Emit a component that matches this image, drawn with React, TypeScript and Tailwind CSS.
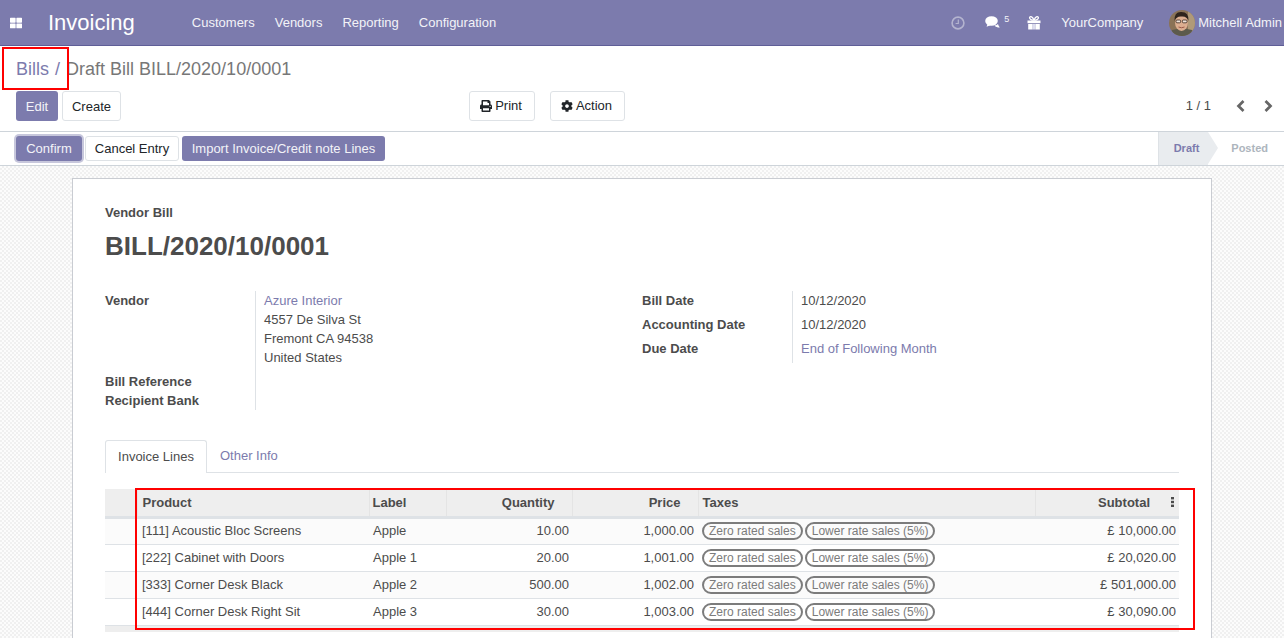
import { FaCog, FaPrint, FaThLarge } from 'react-icons/fa';

const lines = [
  { product: '[111] Acoustic Bloc Screens', label: 'Apple', qty: '10.00', price: '1,000.00', subtotal: '£ 10,000.00' },
  { product: '[222] Cabinet with Doors', label: 'Apple 1', qty: '20.00', price: '1,001.00', subtotal: '£ 20,020.00' },
  { product: '[333] Corner Desk Black', label: 'Apple 2', qty: '500.00', price: '1,002.00', subtotal: '£ 501,000.00' },
  { product: '[444] Corner Desk Right Sit', label: 'Apple 3', qty: '30.00', price: '1,003.00', subtotal: '£ 30,090.00' },
];

function Avatar() {
  return (
    <svg width="26" height="26" viewBox="0 0 26 26" className="shrink-0">
      <defs>
        <clipPath id="avatar-clip">
          <circle cx="13" cy="13" r="13" />
        </clipPath>
      </defs>
      <g clipPath="url(#avatar-clip)">
        <rect width="26" height="26" fill="#8a7256" />
        <rect x="19" width="7" height="26" fill="#b09a78" />
        <path d="M0 26 L3 20 Q13 17 23 20 L26 26 Z" fill="#5c5a4c" />
        <ellipse cx="12.5" cy="12.5" rx="6.5" ry="8.5" fill="#dcae90" />
        <path d="M5.5 11 Q5 1.5 12.5 2 Q20 2 19.5 11 Q18 6 12.5 6.5 Q7.5 6 5.5 11 Z" fill="#2f241c" />
        <rect x="7" y="10" width="4.6" height="2.8" rx="1" fill="#efe3da" stroke="#3a2a20" strokeWidth="0.8" />
        <rect x="13.4" y="10" width="4.6" height="2.8" rx="1" fill="#efe3da" stroke="#3a2a20" strokeWidth="0.8" />
        <path d="M9.5 17 Q12.5 18.5 15.5 17" stroke="#9c5a48" strokeWidth="1" fill="none" />
      </g>
    </svg>
  );
}

function Clock() {
  return (
    <svg width="14" height="14" viewBox="0 0 14 14" fill="none" stroke="#b4b4cf" strokeWidth="1.6">
      <circle cx="7" cy="7" r="5.9" />
      <path d="M7.3 3.4V7.5H4.6" strokeWidth="1.2" />
    </svg>
  );
}

function Chat() {
  return (
    <svg width="15" height="13" viewBox="0 0 15 13" fill="white">
      <ellipse cx="6.5" cy="5" rx="6.3" ry="4.8" />
      <path d="M2.5 8 L1.6 10.8 L6 9 Z" />
      <path d="M9.5 9.6 Q12 9.4 13 8 Q13.4 9.6 14.8 11.6 Q12.6 11.4 11.8 10.9 Q10.4 11 9.5 9.6 Z" />
    </svg>
  );
}

function Gift() {
  return (
    <svg width="14" height="14" viewBox="0 0 14 14" fill="white">
      <path d="M0.5 4.5H13.5V7.2H0.5Z" />
      <path d="M1.2 8H5.7V13.5H1.2Z" />
      <path d="M8.3 8H12.8V13.5H8.3Z" />
      <path d="M5.9 8H8.1V13.5H5.9Z" fill="#dcdcf0" />
      <path d="M7 4.2 C5.5 0.5 3.5 0.2 2.8 1.2 C2.1 2.4 3.8 4.2 7 4.2 Z M7 4.2 C8.5 0.5 10.5 0.2 11.2 1.2 C11.9 2.4 10.2 4.2 7 4.2 Z" fill="none" stroke="white" strokeWidth="1.3" />
    </svg>
  );
}

function Chevron({ dir }: { dir: 'left' | 'right' }) {
  return (
    <svg width="9" height="12" viewBox="0 0 9 12" fill="none" stroke="#666666" strokeWidth="2.7">
      <path d={dir === 'left' ? 'M7.5 1L2.5 6L7.5 11' : 'M1.5 1L6.5 6L1.5 11'} />
    </svg>
  );
}

function Dots() {
  return (
    <svg width="3" height="10" viewBox="0 0 3 10" fill="#4c4c4c" className="ml-[21px]">
      <rect width="3" height="2.4" />
      <rect y="3.8" width="3" height="2.4" />
      <rect y="7.6" width="3" height="2.4" />
    </svg>
  );
}

function TaxTag({ children }: { children: string }) {
  return (
    <span className="inline-block h-[18px] rounded-[9px] border-2 border-[#7c7c7c] px-[5px] text-[12px] leading-[14px] text-[#7c7c7c]">
      {children}
    </span>
  );
}

export default function App() {
  return (
    <div className="relative h-[638px] w-[1284px] overflow-hidden bg-white font-['Liberation_Sans',Arial,sans-serif] text-[13px] text-[#4c4c4c]">
      <header className="flex h-[46px] items-center border-b border-[#5f5e97] bg-[#7c7bad] pr-[2px] text-white">
        <FaThLarge className="ml-[10px] text-[12px]" />
        <span className="ml-[26px] text-[22px] leading-none">Invoicing</span>
        <nav className="ml-[57px] flex gap-[20px] text-[#f3f3f8]">
          <span>Customers</span>
          <span>Vendors</span>
          <span>Reporting</span>
          <span>Configuration</span>
        </nav>
        <div className="ml-auto flex items-center text-[#f3f3f8]">
          <Clock />
          <span className="ml-[20px]"><Chat /></span>
          <span className="mb-[6px] ml-[4px] text-[9px]">5</span>
          <span className="ml-[18px]"><Gift /></span>
          <span className="ml-[20px]">YourCompany</span>
          <span className="ml-[26px]"><Avatar /></span>
          <span className="ml-[3px] whitespace-nowrap">Mitchell Admin</span>
        </div>
      </header>

      <section className="h-[86px] border-b border-[#ced4da] px-[16px]">
        <div className="flex h-[45px] items-center pt-[2px] text-[18px] text-[#777777]">
          <span className="text-[#7c7bad]">Bills</span>
          <span className="ml-[6px] mr-[6px] text-[#7c7bad]">/</span>
          <span>Draft Bill BILL/2020/10/0001</span>
        </div>
        <div className="flex items-center">
          <button className="h-[30px] w-[42px] rounded-[3px] bg-[#7c7bad] pt-[1px] text-[#f3f3f8]">Edit</button>
          <button className="ml-[4px] h-[30px] w-[59px] rounded-[3px] border border-[#dee2e6] pt-[1px] text-[#212529]">Create</button>
          <button className="ml-[348px] flex h-[30px] w-[66px] items-center justify-center gap-[3px] rounded-[3px] border border-[#dee2e6] pr-[2px] text-[#212529]">
            <FaPrint className="text-[12px]" /> Print
          </button>
          <button className="ml-[15px] flex h-[30px] w-[75px] items-center justify-center gap-[3px] rounded-[3px] border border-[#dee2e6] pr-[2px] text-[#212529]">
            <FaCog className="text-[12px]" /> Action
          </button>
          <span className="ml-auto text-[#4c4c4c]">1 / 1</span>
          <span className="ml-[25px]"><Chevron dir="left" /></span>
          <span className="-mr-[5px] ml-[19px]"><Chevron dir="right" /></span>
        </div>
      </section>

      <section className="flex h-[34px] items-center border-b border-[#ced4da] pl-[16px]">
        <button className="h-[25px] w-[66px] rounded-[3px] bg-[#7c7bad] text-[#f3f3f8] shadow-[0_0_0_2px_#c7c7dc]">Confirm</button>
        <button className="ml-[3px] h-[25px] w-[94px] rounded-[3px] border border-[#dee2e6] text-[#212529]">Cancel Entry</button>
        <button className="ml-[3px] h-[25px] w-[203px] rounded-[3px] bg-[#7c7bad] text-[#f3f3f8]">Import Invoice/Credit note Lines</button>
        <div className="ml-auto flex h-full items-stretch text-[11px] font-bold">
          <div className="relative flex w-[50px] items-center justify-center border-l border-[#dee2e6] bg-[#e9ecef] pl-[6px] text-[#7c7bad]">
            Draft
            <span className="absolute left-full top-0 h-0 w-0 border-y-[16.5px] border-l-[10px] border-y-transparent border-l-[#e9ecef]" />
          </div>
          <div className="flex w-[76px] items-center justify-end pr-[16px] text-[#adb5bd]">Posted</div>
        </div>
      </section>

      <main className="h-[472px] bg-[#f6f6f6] bg-[repeating-conic-gradient(#f0f0f0_0_25%,#fcfcfc_0_50%)] bg-[length:4px_4px] px-[72px] pt-[12px]">
        <div className="h-[470px] w-[1140px] border border-[#c9ccd2] bg-white px-[32px] pt-[26px]">
          <div className="font-bold leading-[15px]">Vendor Bill</div>
          <h1 className="mt-[8px] text-[26px] font-bold leading-[36px]">BILL/2020/10/0001</h1>

          <div className="mt-[27px] flex h-[119px]">
            <div className="flex w-[537px]">
              <div className="w-[150px] font-bold">
                <div className="leading-[19px]">Vendor</div>
                <div className="mt-[62px] leading-[19px]">Bill Reference</div>
                <div className="leading-[19px]">Recipient Bank</div>
              </div>
              <div className="border-l border-[#dee2e6] pl-[8px] leading-[19px]">
                <div className="text-[#7c7bad]">Azure Interior</div>
                <div>4557 De Silva St</div>
                <div>Fremont CA 94538</div>
                <div>United States</div>
              </div>
            </div>
            <div className="flex h-[72px]">
              <div className="flex w-[150px] flex-col gap-[5px] font-bold leading-[19px]">
                <div>Bill Date</div>
                <div>Accounting Date</div>
                <div>Due Date</div>
              </div>
              <div className="flex flex-col gap-[5px] border-l border-[#dee2e6] pl-[8px] leading-[19px]">
                <div>10/12/2020</div>
                <div>10/12/2020</div>
                <div className="text-[#7c7bad]">End of Following Month</div>
              </div>
            </div>
          </div>

          <div className="mt-[30px] flex h-[33px] border-b border-[#dee2e6]">
            <div className="h-[33px] w-[102px] rounded-t-[3px] border border-b-0 border-[#dee2e6] bg-white text-center leading-[32px]">Invoice Lines</div>
            <div className="pl-[13px] leading-[32px] text-[#7c7bad]">Other Info</div>
          </div>

          <table className="mt-[16px] w-[1074px] table-fixed border-collapse">
            <colgroup>
              <col className="w-[32px]" />
              <col className="w-[232px]" />
              <col className="w-[77px]" />
              <col className="w-[126px]" />
              <col className="w-[126px]" />
              <col className="w-[337px]" />
              <col className="w-[144px]" />
            </colgroup>
            <thead>
              <tr className="h-[28px] border-b-[3px] border-[#dee2e6] bg-[#eeeeee] font-bold">
                <th />
                <th className="border-l border-[#e4e4e4] pl-[5px] text-left">Product</th>
                <th className="border-l border-[#e4e4e4] pl-[3px] text-left">Label</th>
                <th className="border-l border-[#e4e4e4] pr-[17px] text-right">Quantity</th>
                <th className="border-l border-[#e4e4e4] pr-[17px] text-right">Price</th>
                <th className="border-l border-[#e4e4e4] pl-[4px] text-left">Taxes</th>
                <th className="border-l border-[#e4e4e4]">
                  <div className="flex items-center justify-end pr-[5px]">
                    Subtotal
                    <Dots />
                  </div>
                </th>
              </tr>
            </thead>
            <tbody>
              {lines.map((line, i) => (
                <tr key={line.product} className={`h-[27px] border-b border-[#dee2e6] ${i % 2 === 0 ? 'bg-[#fbfbfb]' : 'bg-white'}`}>
                  <td />
                  <td className="pl-[5px] whitespace-nowrap">{line.product}</td>
                  <td className="pl-[4px]">{line.label}</td>
                  <td className="pr-[3px] text-right">{line.qty}</td>
                  <td className="pr-[4px] text-right">{line.price}</td>
                  <td className="pl-[4px]">
                    <div className="flex items-center gap-[2px]">
                      <TaxTag>Zero rated sales</TaxTag>
                      <TaxTag>Lower rate sales (5%)</TaxTag>
                    </div>
                  </td>
                  <td className="pr-[3px] text-right">{line.subtotal}</td>
                </tr>
              ))}
              <tr className="h-[7px] bg-[#eeeeee]">
                <td colSpan={7} />
              </tr>
            </tbody>
          </table>
        </div>
      </main>

      <div className="absolute left-[2px] top-[47px] h-[43px] w-[67px] border-2 border-[#ff0000]" />
      <div className="absolute left-[135px] top-[488px] h-[142px] w-[1060px] border-2 border-[#ff0000]" />
    </div>
  );
}
